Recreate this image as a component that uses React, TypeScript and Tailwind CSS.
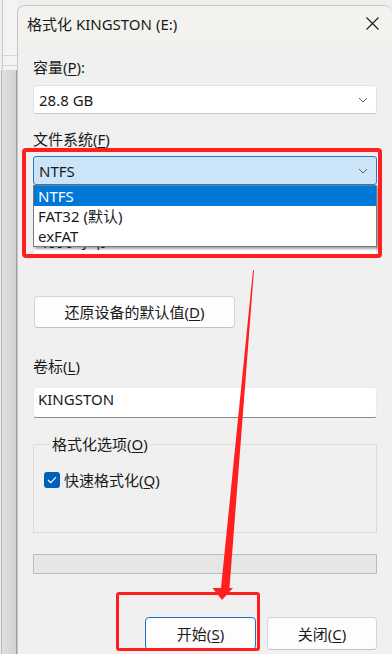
import React from "react";

const FONT = { fontFamily: '"Segoe UI", "Noto Sans", "Noto Sans CJK SC", sans-serif' };

function Chevron() {
  return (
    <svg width="10" height="6" viewBox="0 0 10 6" className="shrink-0">
      <path d="M1 1 L5 5 L9 1" fill="none" stroke="#5f5f5f" strokeWidth="1" />
    </svg>
  );
}

function Combo({ text, active = false }: { text: string; active?: boolean }) {
  return (
    <div
      className={
        "h-[29px] flex items-center justify-between pl-[5px] pr-[8px] rounded-[3px] border " +
        (active ? "bg-[#cce4f7] border-[#2a79c9]" : "bg-white border-[#e3e3e3] border-b-[#c8c8c8]")
      }
    >
      <span className="text-[15px] leading-[20px] text-[#1a1a1a]">{text}</span>
      <Chevron />
    </div>
  );
}

function Label({ children }: { children: React.ReactNode }) {
  return <div className="text-[15px] leading-[20px] text-[#1a1a1a]">{children}</div>;
}

export default function App() {
  return (
    <div className="relative w-[392px] h-[654px] overflow-hidden flex bg-[#efefef]" style={FONT}>
      {/* left strip (window behind) */}
      <div className="w-[17px] shrink-0 flex flex-col">
        <div className="h-[70px] bg-[#f3f3f3] border-l border-[#c9c9c9] ml-[2px] flex flex-col">
          <div className="h-[56px] border-b border-[#d6d6d6]" />
          <div className="h-[10px] border-b border-[#d6d6d6]" />
        </div>
        <div className="flex-1 ml-[1px] border-l border-[#b5b5b5] border-r border-r-[#9f9f9f] bg-gradient-to-r from-[#e0e0e0] to-[#d2d2d2]" />
      </div>

      {/* dialog */}
      <div className="flex-1 mt-[5px] flex flex-col rounded-t-[8px] border-l border-t border-[#c6c6c6] bg-[#f0f0f0] overflow-hidden">
        <div className="h-[36px] shrink-0 bg-[#f3f2ee] flex items-center justify-between pl-[9px] pr-[13px] pb-[1px]">
          <span className="text-[15px] leading-[20px] text-[#1a1a1a]">格式化 KINGSTON (E:)</span>
          <svg width="13" height="13" viewBox="0 0 13 13">
            <path d="M0.5 0.5 L12.5 12.5 M12.5 0.5 L0.5 12.5" stroke="#1a1a1a" strokeWidth="1.1" />
          </svg>
        </div>

        <div className="flex flex-col px-[15px] pr-[15px]">
          <div className="mt-[15px]">
            <Label>
              容量(<u className="underline-offset-2">P</u>):
            </Label>
          </div>
          <div className="mt-[8px]">
            <Combo text="28.8 GB" />
          </div>

          <div className="mt-[15px]">
            <Label>
              文件系统(<u className="underline-offset-2">F</u>)
            </Label>
          </div>
          <div className="mt-[7px] relative">
            <Combo text="NTFS" active />
            {/* dropdown list */}
            <div className="absolute left-0 top-full w-[344px] bg-white border border-[#7a7a7a] shadow-[2px_2px_2px_rgba(0,0,0,0.35)] z-10 flex flex-col">
              <div className="h-[20px] bg-[#0078d7] text-white text-[15px] leading-[20px] pl-[4px]">NTFS</div>
              <div className="h-[20px] text-[#1a1a1a] text-[15px] leading-[20px] pl-[4px]">FAT32 (默认)</div>
              <div className="h-[20px] text-[#1a1a1a] text-[15px] leading-[20px] pl-[4px]">exFAT</div>
            </div>
          </div>

          {/* allocation unit label hidden behind the open list */}
          <div className="mt-[15px] h-[20px]" />
          <div className="mt-[7px]">
            <Combo text="4096 字节" />
          </div>

          <button className="mt-[40px] ml-px w-[201px] h-[32px] rounded-[4px] bg-[#fdfdfd] border border-[#d5d5d5] border-b-[#c2c2c2] text-[15px] leading-[20px] text-[#1a1a1a]">
            还原设备的默认值(<u className="underline-offset-2">D</u>)
          </button>

          <div className="mt-[28px]">
            <Label>
              卷标(<u className="underline-offset-2">L</u>)
            </Label>
          </div>
          <div className="mt-[11px] h-[31px] bg-white border border-[#ececec] border-b-[#8a8a8a] rounded-[3px] flex items-start pt-[1px] pl-[4px]">
            <span className="text-[15px] leading-[20px] text-[#1a1a1a]">KINGSTON</span>
          </div>

          <fieldset className="mt-[16px] h-[99px] border border-[#dcdcdc] px-[10px]">
            <legend className="ml-[6px] px-[2px] text-[15px] leading-[20px] text-[#1a1a1a]">
              格式化选项(<u className="underline-offset-2">O</u>)
            </legend>
            <div className="mt-[16px] flex items-center gap-[4px] h-[20px]">
              <div className="w-[16px] h-[16px] rounded-[3px] bg-[#005fb8] flex items-center justify-center">
                <svg width="10" height="8" viewBox="0 0 10 8">
                  <path d="M1 4 L3.8 6.6 L9 1.2" fill="none" stroke="white" strokeWidth="1.2" />
                </svg>
              </div>
              <span className="text-[15px] leading-[20px] text-[#1a1a1a]">
                快速格式化(<u className="underline-offset-2">Q</u>)
              </span>
            </div>
          </fieldset>

          <div className="mt-[21px] h-[20px] bg-[#e6e6e6] border border-[#bcbcbc]" />

          <div className="mt-[43px] flex justify-end gap-[11px]">
            <button className="w-[111px] h-[33px] rounded-[4px] bg-[#fdfdfd] border border-[#1f6fc5] text-[15px] leading-[20px] text-[#1a1a1a]">
              开始(<u className="underline-offset-2">S</u>)
            </button>
            <button className="w-[110px] h-[33px] rounded-[4px] bg-[#fdfdfd] border border-[#d5d5d5] border-b-[#c2c2c2] text-[15px] leading-[20px] text-[#1a1a1a]">
              关闭(<u className="underline-offset-2">C</u>)
            </button>
          </div>
        </div>
      </div>

      {/* annotations */}
      <div className="absolute left-[22px] top-[148px] w-[360px] h-[110px] border-[4px] border-[#ff1f1f] rounded-[4px] z-20 pointer-events-none" />
      <div className="absolute left-[116px] top-[592px] w-[144px] h-[59px] border-[3px] border-[#ff1f1f] rounded-[3px] z-20 pointer-events-none" />
      <svg className="absolute left-0 top-0 z-20 pointer-events-none" width="392" height="654" viewBox="0 0 392 654">
        <polygon
          points="253,270 254,270 229.5,588 233,588 222,600 212.5,588 221,588"
          fill="#ff1f1f"
        />
      </svg>
    </div>
  );
}
